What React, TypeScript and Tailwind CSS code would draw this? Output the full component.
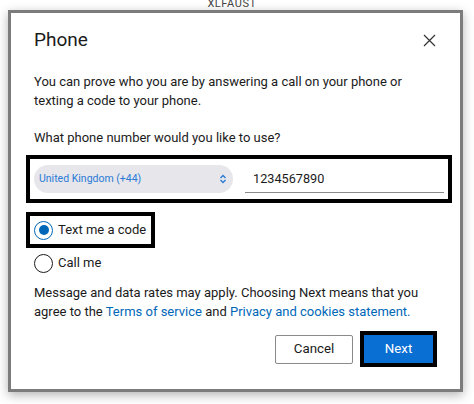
import React from "react";

const Radio = ({ checked }: { checked?: boolean }) => (
  <span
    className={
      "flex h-[19px] w-[19px] shrink-0 items-center justify-center rounded-full border-[1.5px] " +
      (checked ? "border-[#0067b8]" : "border-[#1b1b1b]")
    }
  >
    {checked && <span className="h-[10px] w-[10px] rounded-full bg-[#0067b8]" />}
  </span>
);

const App = () => {
  return (
    <div
      className="h-[404px] w-[474px] overflow-hidden bg-white text-[#1b1b1b]"
      style={{ fontFamily: 'Roboto, "Noto Sans", sans-serif' }}
    >
      <div className="flex h-[10px] items-end justify-center overflow-hidden pr-[10px]">
        <span className="text-[11px] leading-[13px] tracking-wider text-[#444]">XLFAUST</span>
      </div>

      <div className="ml-[8px] h-[382px] w-[455px] border-[3px] border-[#7c7c7c] bg-white px-[23px] pt-[13px] shadow-[0_3px_10px_rgba(0,0,0,0.3)]">
        <div className="flex items-center justify-between">
          <h1 className="text-[19px] leading-[28px] font-normal">Phone</h1>
          <svg width="13" height="13" viewBox="0 0 13 13" className="mr-[1px]">
            <path d="M1 1L12 12M12 1L1 12" stroke="#333" strokeWidth="1.2" />
          </svg>
        </div>

        <p className="mt-[18px] text-[13px] leading-[19px]">
          You can prove who you are by answering a call on your phone or
          texting a code to your phone.
        </p>

        <p className="mt-[18px] text-[13px] leading-[19px]">What phone number would you like to use?</p>

        <div className="-mr-[15px] -ml-[8px] mt-[8px] flex h-[48px] items-center gap-[12px] border-[4px] border-black pr-[4px] pl-[4px]">
          <div className="flex h-[28px] w-[199px] items-center justify-between rounded-full bg-[#e6e6eb] pr-[6px] pl-[5px]">
            <span className="text-[10.5px] text-[#2b7bd6]">United Kingdom (+44)</span>
            <svg width="8" height="10" viewBox="0 0 8 10">
              <path d="M1.5 4L4 1.5L6.5 4M1.5 6L4 8.5L6.5 6" fill="none" stroke="#2b7bd6" strokeWidth="1.4" />
            </svg>
          </div>
          <div className="flex h-[28px] w-[199px] items-center border-b border-[#8a8a8a] pl-[8px] text-[12.7px]">
            1234567890
          </div>
        </div>

        <div className="-ml-[8px] mt-[9px] flex h-[36px] w-[129px] items-center gap-[5px] border-[4px] border-black pl-[4px]">
          <Radio checked />
          <span className="whitespace-nowrap text-[13px]">Text me a code</span>
        </div>

        <div className="mt-[3px] flex h-[24px] items-center gap-[5px]">
          <Radio />
          <span className="text-[13px]">Call me</span>
        </div>

        <p className="mt-[8px] text-[13px] leading-[19px]">
          Message and data rates may apply. Choosing Next means that you
          agree to the <span className="text-[#0067b8]">Terms of service</span> and{" "}
          <span className="text-[#0067b8]">Privacy and cookies statement.</span>
        </p>

        <div className="mt-[10px] flex items-center justify-end gap-[7px]">
          <button className="h-[29px] w-[78px] rounded-[2px] border border-[#8a8a8a] bg-white text-[13.3px]">
            Cancel
          </button>
          <div className="border-[4px] border-black">
            <button className="h-[28px] w-[69px] bg-[#0a6fd3] text-[13.3px] text-white">Next</button>
          </div>
        </div>
      </div>
    </div>
  );
};

export default App;
